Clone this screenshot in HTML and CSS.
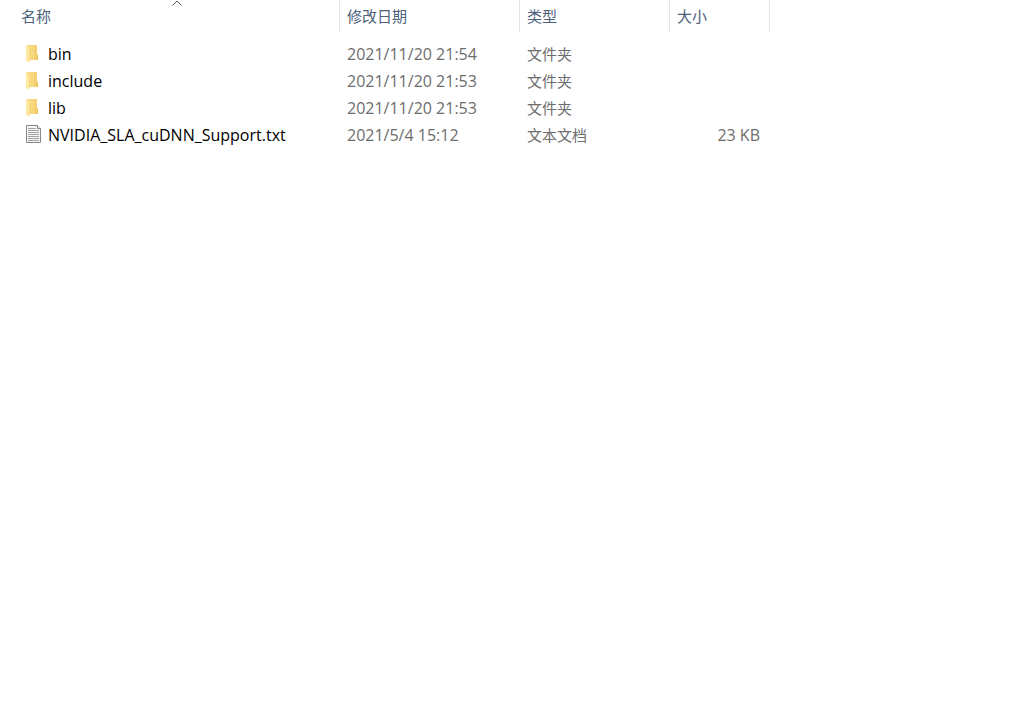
FILE: index.html
```html
<!DOCTYPE html>
<html lang="zh-CN">
<head>
    <meta charset="UTF-8">
    <meta name="viewport" content="width=device-width, initial-scale=1.0">
    <title>cuda</title>
    <link rel="stylesheet" href="styles.css">
</head>
<body>
    <!-- Icons used by the rows below -->
    <svg class="icon-defs" aria-hidden="true">
        <symbol id="folder" viewBox="0 -1 16 22">
            <path d="M1 0h10v9l1 1v5H4z" fill="#f7d87f"/>
            <path d="M8 0h3v9l1 1v5H8z" fill="#f4d070"/>
            <path d="M11 10l1 .5V15h-1z" fill="#e6bd4e"/>
            <path d="M0 0l4 2.500v12.500l-1 2.500L0 15.500z" fill="#ffe8a2"/>
            <path d="M3 2l1 .5V15l-1 2.500z" fill="#fadb85"/>
        </symbol>
        <symbol id="text-file" viewBox="0 0 16 22">
            <path d="M.5.5h11l3 3v14H.5z" fill="#f7f7f7" stroke="#868686"/>
            <path d="M11.500.5v3h3" fill="#fff" stroke="#868686"/>
            <path d="M2 3.500h8M2 5.500h11M2 7.500h11M2 9.500h11M2 11.500h11M2 13.500h11M2 15.500h11" fill="none" stroke="#a2a2a2"/>
        </symbol>
    </svg>

    <table class="file-list">
        <colgroup>
            <col class="col-name">
            <col class="col-date">
            <col class="col-type">
            <col class="col-size">
        </colgroup>
        <thead>
            <tr>
                <th aria-sort="ascending">
                    名称
                    <svg class="sort-arrow" viewBox="0 0 10 6" aria-hidden="true"><path d="M.5 5.500L5 1l4.500 4.500" fill="none" stroke="#5a5a5a"/></svg>
                </th>
                <th>修改日期</th>
                <th>类型</th>
                <th>大小</th>
            </tr>
        </thead>
        <tbody>
            <tr>
                <td><div class="file-name"><svg class="icon"><use href="#folder"/></svg>bin</div></td>
                <td class="date">2021/11/20 21:54</td>
                <td>文件夹</td>
                <td class="size"></td>
            </tr>
            <tr>
                <td><div class="file-name"><svg class="icon"><use href="#folder"/></svg>include</div></td>
                <td class="date">2021/11/20 21:53</td>
                <td>文件夹</td>
                <td class="size"></td>
            </tr>
            <tr>
                <td><div class="file-name"><svg class="icon"><use href="#folder"/></svg>lib</div></td>
                <td class="date">2021/11/20 21:53</td>
                <td>文件夹</td>
                <td class="size"></td>
            </tr>
            <tr>
                <td><div class="file-name"><svg class="icon"><use href="#text-file"/></svg>NVIDIA_SLA_cuDNN_Support.txt</div></td>
                <td class="date">2021/5/4 15:12</td>
                <td>文本文档</td>
                <td class="size">23 KB</td>
            </tr>
        </tbody>
    </table>
</body>
</html>
```

FILE: styles.css
```css
body {
    margin: 0;
    padding: 0 14px;
    background: #fff;
    font-family: "Open Sans", "Noto Sans CJK SC", sans-serif;
    font-size: 15px;
    color: #6d6d6d;
}
.icon-defs {
    display: none;
}
.file-list {
    table-layout: fixed;
    width: 756px;
    border-collapse: separate;
    border-spacing: 0;
}
.col-name {
    width: 326px;
}
.col-date {
    width: 180px;
}
.col-type {
    width: 150px;
}
.col-size {
    width: 100px;
}
th {
    position: relative;
    box-sizing: border-box;
    height: 32px;
    padding: 0 7px;
    border-right: 1px solid #e5e5e5;
    color: #4c607a;
    font-weight: normal;
    line-height: 32px;
    text-align: left;
}
.sort-arrow {
    position: absolute;
    top: 0;
    left: 50%;
    width: 10px;
    height: 6px;
    margin-left: -5px;
}
/* space between the header and the first row */
tbody::before {
    content: "";
    display: block;
    height: 9px;
}
td {
    height: 27px;
    padding: 0 7px;
    line-height: 27px;
    white-space: nowrap;
}
.file-name {
    display: flex;
    align-items: center;
    gap: 6px;
    padding-left: 5px;
    font-size: 16px;
    color: #000;
}
.icon {
    width: 16px;
    height: 22px;
}
.date,
.size {
    font-size: 16px;
}
td.size {
    padding-right: 10px;
    text-align: right;
}
```
